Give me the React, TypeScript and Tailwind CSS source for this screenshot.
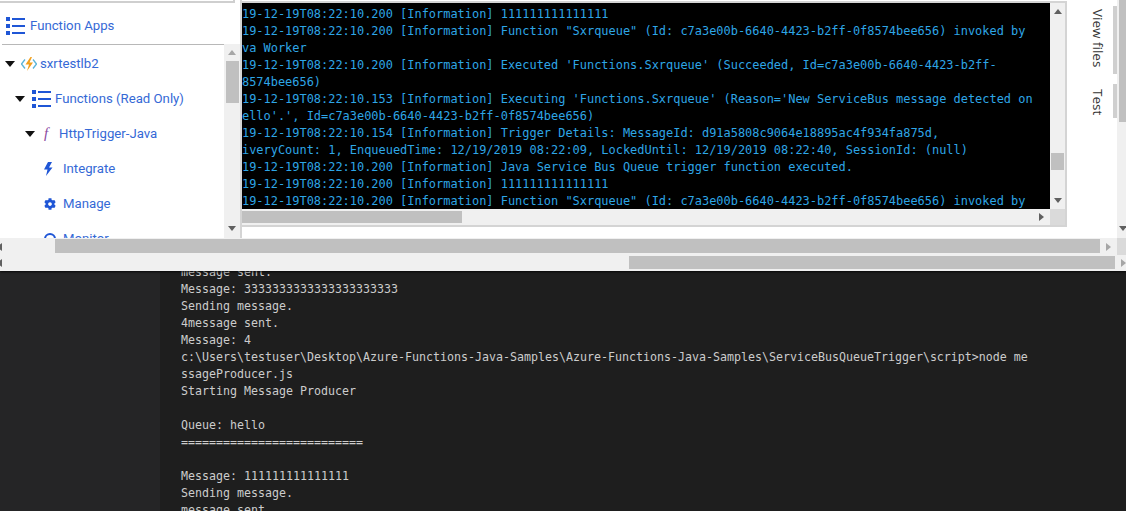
import React from "react";
import { FaCog } from "react-icons/fa";

const logLines = [
  "19-12-19T08:22:10.200 [Information] 111111111111111",
  '19-12-19T08:22:10.200 [Information] Function "Sxrqueue" (Id: c7a3e00b-6640-4423-b2ff-0f8574bee656) invoked by',
  "va Worker",
  "19-12-19T08:22:10.200 [Information] Executed 'Functions.Sxrqueue' (Succeeded, Id=c7a3e00b-6640-4423-b2ff-",
  "8574bee656)",
  "19-12-19T08:22:10.153 [Information] Executing 'Functions.Sxrqueue' (Reason='New ServiceBus message detected on",
  "ello'.', Id=c7a3e00b-6640-4423-b2ff-0f8574bee656)",
  "19-12-19T08:22:10.154 [Information] Trigger Details: MessageId: d91a5808c9064e18895ac4f934fa875d,",
  "iveryCount: 1, EnqueuedTime: 12/19/2019 08:22:09, LockedUntil: 12/19/2019 08:22:40, SessionId: (null)",
  "19-12-19T08:22:10.200 [Information] Java Service Bus Queue trigger function executed.",
  "19-12-19T08:22:10.200 [Information] 111111111111111",
  '19-12-19T08:22:10.200 [Information] Function "Sxrqueue" (Id: c7a3e00b-6640-4423-b2ff-0f8574bee656) invoked by',
];

const termLines = [
  "message sent.",
  "Message: 3333333333333333333333",
  "Sending message.",
  "4message sent.",
  "Message: 4",
  "c:\\Users\\testuser\\Desktop\\Azure-Functions-Java-Samples\\Azure-Functions-Java-Samples\\ServiceBusQueueTrigger\\script>node me",
  "ssageProducer.js",
  "Starting Message Producer",
  "\u00a0",
  "Queue: hello",
  "==========================",
  "\u00a0",
  "Message: 111111111111111",
  "Sending message.",
  "message sent.",
];

function ListIcon() {
  return (
    <svg width="19" height="18" viewBox="0 0 19 18" fill="#1f56d6">
      <rect x="0" y="0" width="4" height="4" />
      <rect x="0" y="7" width="4" height="4" />
      <rect x="0" y="14" width="4" height="4" />
      <rect x="6" y="1" width="13" height="2" />
      <rect x="6" y="8" width="13" height="2" />
      <rect x="6" y="15" width="13" height="2" />
    </svg>
  );
}

function Caret() {
  return (
    <svg width="10" height="6" viewBox="0 0 10 6">
      <path d="M0 0h10L5 6z" fill="#111" />
    </svg>
  );
}

function FnAppIcon() {
  return (
    <svg width="16" height="16" viewBox="0 0 16 16">
      <path d="M4 3.500 0.500 8 4 12.500" fill="none" stroke="#59b4d9" strokeWidth="1.3" />
      <path d="M12 3.500 15.500 8 12 12.500" fill="none" stroke="#59b4d9" strokeWidth="1.3" />
      <path d="M9.500 1 4.500 8.500H8L6 15l6-8.500H8.500L11 1z" fill="#f2a01e" />
    </svg>
  );
}

function Arrow({ dir, color = "#a6a6a6" }: { dir: "up" | "down" | "left" | "right"; color?: string }) {
  const d = {
    up: "M0 5h8L4 0z",
    down: "M0 0h8L4 5z",
    left: "M5 0v8L0 4z",
    right: "M0 0v8l5-4z",
  }[dir];
  const vertical = dir === "up" || dir === "down";
  return (
    <svg width={vertical ? 8 : 5} height={vertical ? 5 : 8} viewBox={vertical ? "0 0 8 5" : "0 0 5 8"}>
      <path d={d} fill={color} />
    </svg>
  );
}

export default function App() {
  return (
    <div className="w-[1126px] h-[511px] overflow-hidden bg-[#1e1e1e] flex flex-col font-['Roboto',sans-serif]">
      {/* Portal window */}
      <div className="h-[271px] shrink-0 bg-white flex flex-col shadow-[0_1px_2px_rgba(0,0,0,0.8)] z-10">
        <div className="h-[238px] flex shrink-0 overflow-hidden">
          {/* Tree */}
          <div className="w-[242px] shrink-0 flex flex-col border-r-[2px] border-[#d4d4d4]">
            <div className="h-[3px] w-[235px] border-b-[2px] border-r-[2px] border-[#cfcfcf] shrink-0" />
            <div className="h-[42px] w-[224px] ml-[2px] border-b border-[#b8b8b8] flex items-center gap-[5px] pl-[4px] pt-[5px] shrink-0 text-[13.2px] text-[#3569d6]">
              <ListIcon />
              <span>Function Apps</span>
            </div>
            <div className="flex flex-1 min-h-0">
              <div className="w-[224px] overflow-hidden text-[13.2px] text-[#3569d6]">
                <div className="h-[35px] flex items-center pl-[5px] gap-[6px] mt-[1px]">
                  <Caret />
                  <FnAppIcon />
                  <span className="-ml-[3px]">sxrtestlb2</span>
                </div>
                <div className="h-[35px] flex items-center pl-[15px] gap-[7px]">
                  <Caret />
                  <ListIcon />
                  <span className="-ml-[3px]">Functions (Read Only)</span>
                </div>
                <div className="h-[35px] flex items-center pl-[25px] gap-[9px]">
                  <Caret />
                  <span className="font-['Liberation_Serif',serif] italic text-[#8a4aa0] text-[15px] w-[6px]">f</span>
                  <span>HttpTrigger-Java</span>
                </div>
                <div className="h-[35px] flex items-center pl-[44px] gap-[10px]">
                  <svg width="9" height="14" viewBox="0 0 9 14">
                    <path d="M4 0 0 7.500h3.500L2 14l6.500-8.500H5L8 0z" fill="#1f56d6" />
                  </svg>
                  <span>Integrate</span>
                </div>
                <div className="h-[35px] flex items-center pl-[44px] gap-[7px]">
                  <FaCog className="text-[#1f56d6] text-[12px]" />
                  <span>Manage</span>
                </div>
                <div className="h-[35px] flex items-center pl-[44px] gap-[7px]">
                  <svg width="12" height="12" viewBox="0 0 12 12">
                    <circle cx="6" cy="6" r="5" fill="none" stroke="#1f56d6" strokeWidth="2" />
                  </svg>
                  <span>Monitor</span>
                </div>
              </div>
              {/* Tree scrollbar */}
              <div className="w-[16px] bg-[#f0f0f0] flex flex-col -mt-[1px] pb-[1px]">
                <div className="h-[17px] flex items-center justify-center">
                  <Arrow dir="up" />
                </div>
                <div className="ml-[2px] w-[13px] h-[42px] bg-[#c0c0c0]" />
                <div className="flex-1" />
                <div className="h-[17px] flex items-center justify-center">
                  <Arrow dir="down" color="#606060" />
                </div>
              </div>
            </div>
          </div>

          {/* Log stream */}
          <div className="w-[825px] h-[226px] mt-[1px] shrink-0 flex flex-col border-t-[2px] border-b-[2px] border-r-[2px] border-[#d4d4d4]">
            <div className="flex h-[206px] shrink-0">
              <div className="flex-1 bg-black overflow-hidden pt-[3px] text-[#2ea6e6] text-[11.95px] leading-[17px] font-['DejaVu_Sans_Mono',monospace] whitespace-pre">
                {logLines.map((line, i) => (
                  <div key={i}>{line}</div>
                ))}
              </div>
              <div className="w-[15px] bg-[#f0f0f0] flex flex-col">
                <div className="h-[17px] flex items-center justify-center">
                  <Arrow dir="up" color="#606060" />
                </div>
                <div className="h-[133px]" />
                <div className="ml-[1px] w-[13px] h-[17px] bg-[#c0c0c0]" />
                <div className="flex-1" />
                <div className="h-[17px] flex items-center justify-center">
                  <Arrow dir="down" color="#606060" />
                </div>
              </div>
            </div>
            <div className="flex-1 flex bg-[#f0f0f0]">
              <div className="w-[220px] my-[2px] bg-[#c0c0c0]" />
              <div className="flex-1" />
              <div className="w-[17px] flex items-center justify-center">
                <Arrow dir="right" color="#606060" />
              </div>
              <div className="w-[15px] bg-[#dadada]" />
            </div>
          </div>

          {/* Side tabs */}
          <div className="flex-1 flex min-w-0">
            <div className="w-[46px] ml-[4px] pt-[6px] flex flex-col gap-[10px] text-[13.5px] text-[#333] font-['Open_Sans',sans-serif]">
              <div className="h-[68px] flex pl-[20px]">
                <span className="[writing-mode:vertical-rl] pt-[3px] leading-[13px]">View files</span>
                <div className="ml-auto w-[4px] h-full bg-[#cfcfcf]" />
              </div>
              <div className="h-[34px] flex pl-[20px]">
                <span className="[writing-mode:vertical-rl] pt-[5px] leading-[13px]">Test</span>
                <div className="ml-auto w-[4px] h-full bg-[#cfcfcf]" />
              </div>
            </div>
            {/* Outer vertical scrollbar */}
            <div className="flex-1 bg-[#f0f0f0] flex flex-col pl-[2px]">
              <div className="h-[122px] bg-[#c0c0c0]" />
              <div className="flex-1" />
              <div className="h-[12px] -mr-[4px] flex items-start">
                <Arrow dir="down" color="#606060" />
              </div>
            </div>
          </div>
        </div>

        {/* Outer scrollbars */}
        <div className="h-[17px] flex bg-[#f0f0f0] shrink-0">
          <div className="w-[55px] flex items-center -ml-[3px]">
            <Arrow dir="left" color="#606060" />
          </div>
          <div className="w-[1045px] ml-[3px] mt-[1px] h-[14px] bg-[#c0c0c0]" />
          <div className="w-[17px] flex items-center justify-center">
            <Arrow dir="right" />
          </div>
          <div className="flex-1 bg-[#dadada]" />
        </div>
        <div className="h-[16px] flex bg-[#f0f0f0] shrink-0 overflow-hidden">
          <div className="w-[630px] flex items-center -ml-[3px]">
            <Arrow dir="left" color="#606060" />
          </div>
          <div className="w-[487px] ml-[3px] mt-[1px] h-[13px] bg-[#c0c0c0]" />
          <div className="flex-1 flex items-center pl-[6px]">
            <Arrow dir="right" />
          </div>
        </div>
      </div>

      {/* Terminal */}
      <div className="flex-1 flex min-h-0">
        <div className="w-[160px] bg-[#252526] shrink-0" />
        <div className="flex-1 overflow-hidden pl-[21px] -mt-[7px] text-[#cccccc] text-[11.63px] leading-[17px] font-['DejaVu_Sans_Mono',monospace] whitespace-pre">
          {termLines.map((line, i) => (
            <div key={i}>{line}</div>
          ))}
        </div>
      </div>
    </div>
  );
}
